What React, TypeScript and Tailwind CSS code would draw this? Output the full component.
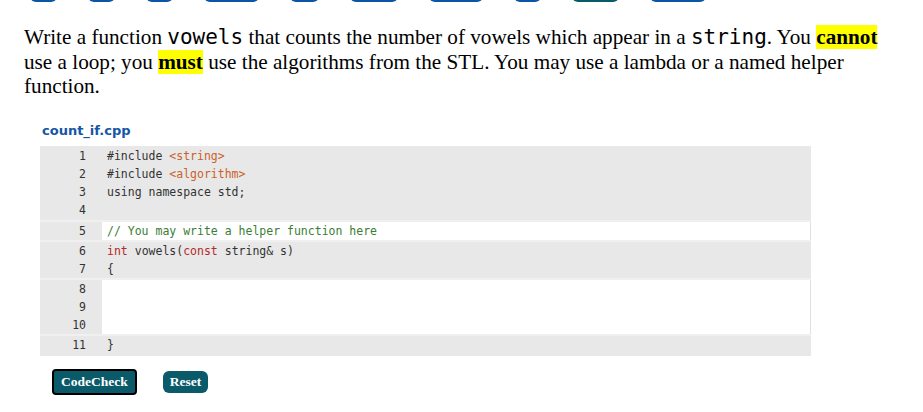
import React from "react";

type Tok = { t: string; c?: string };

const ORANGE = "text-[#c9622b]";
const GREEN = "text-[#3b7d34]";
const RED = "text-[#b22a2a]";

const segments: { editable: boolean; lines: Tok[][] }[] = [
  {
    editable: false,
    lines: [
      [{ t: "#include " }, { t: "<string>", c: ORANGE }],
      [{ t: "#include " }, { t: "<algorithm>", c: ORANGE }],
      [{ t: "using namespace std;" }],
      [{ t: "" }],
    ],
  },
  {
    editable: true,
    lines: [[{ t: "// You may write a helper function here", c: GREEN }]],
  },
  {
    editable: false,
    lines: [
      [
        { t: "int", c: RED },
        { t: " vowels(" },
        { t: "const", c: RED },
        { t: " string& s)" },
      ],
      [{ t: "{" }],
    ],
  },
  { editable: true, lines: [[{ t: "" }], [{ t: "" }], [{ t: "" }]] },
  { editable: false, lines: [[{ t: "}" }]] },
];

const navButtons = [
  { w: "w-[27px]", teal: false },
  { w: "w-[27px]", teal: false },
  { w: "w-[27px]", teal: false },
  { w: "w-[55px]", teal: false },
  { w: "w-[29px]", teal: false },
  { w: "w-[48px]", teal: false },
  { w: "w-[54px]", teal: false },
  { w: "w-[27px]", teal: false },
  { w: "w-[47px]", teal: true },
  { w: "w-[56px]", teal: false },
];

const Mono = ({ children }: { children: React.ReactNode }) => (
  <code className="font-['DejaVu_Sans_Mono',monospace] text-[21px]">{children}</code>
);

export default function App() {
  let lineNo = 0;
  return (
    <div className="min-h-screen bg-white">
      {/* row of nav buttons, scrolled mostly out of view */}
      <div className="flex pl-[30px] -mt-[22px]">
        {navButtons.map((b, i) => (
          <div
            key={i}
            className={`${b.w} h-[24px] rounded-md mr-[31px] ${
              b.teal ? "bg-[#0b5a6a]" : "bg-[#0a55a5]"
            }`}
          />
        ))}
      </div>

      <p className="mt-[23px] ml-[24px] mr-[40px] font-['Liberation_Serif',serif] text-[21.2px] leading-[24.5px] text-black">
        Write a function <Mono>vowels</Mono> that counts the number of vowels which appear in a{" "}
        <Mono>string</Mono>. You <b className="bg-[#ffff00]">cannot</b> use a loop; you{" "}
        <b className="bg-[#ffff00]">must</b> use the algorithms from the STL. You may use a lambda or a
        named helper function.
      </p>

      <div className="ml-[40px] mt-[22px] w-[771px]">
        <div className="ml-[2px] font-['DejaVu_Sans',sans-serif] font-bold text-[13px] text-[#1456a6]">
          count_if.cpp
        </div>
        <div className="mt-[6px] bg-[#e8e8e8] font-['DejaVu_Sans_Mono',monospace] text-[11.5px] text-[#333]">
          {segments.map((seg, si) => (
            <div
              key={si}
              className={`${si > 0 ? "border-t-2 border-[#f0f0f0]" : ""} ${
                si === 0 ? "pt-[1px] pb-[1px]" : ""
              } ${si === segments.length - 1 ? "pb-[2px]" : ""}`}
            >
              {seg.lines.map((ln, li) => {
                lineNo += 1;
                return (
                  <div key={li} className="flex h-[18px] leading-[18px]">
                    <div className="w-[62px] shrink-0 pr-[16px] text-right text-[#333]">{lineNo}</div>
                    <div
                      className={`flex-1 pl-[5px] whitespace-pre ${
                        seg.editable ? "bg-white border-r border-[#e0e0e0]" : ""
                      }`}
                    >
                      {ln.map((tk, ti) => (
                        <span key={ti} className={tk.c}>
                          {tk.t}
                        </span>
                      ))}
                    </div>
                  </div>
                );
              })}
            </div>
          ))}
        </div>
      </div>

      <div className="flex items-center ml-[52px] mt-[13px] font-['Liberation_Serif',serif] font-bold text-[13.5px] text-white">
        <button className="h-[26px] px-[7px] rounded-[4px] bg-[#0b5a6a] border-2 border-black">
          CodeCheck
        </button>
        <button className="ml-[26px] h-[22px] px-[7px] rounded-[6px] bg-[#0b5a6a]">Reset</button>
      </div>
    </div>
  );
}
